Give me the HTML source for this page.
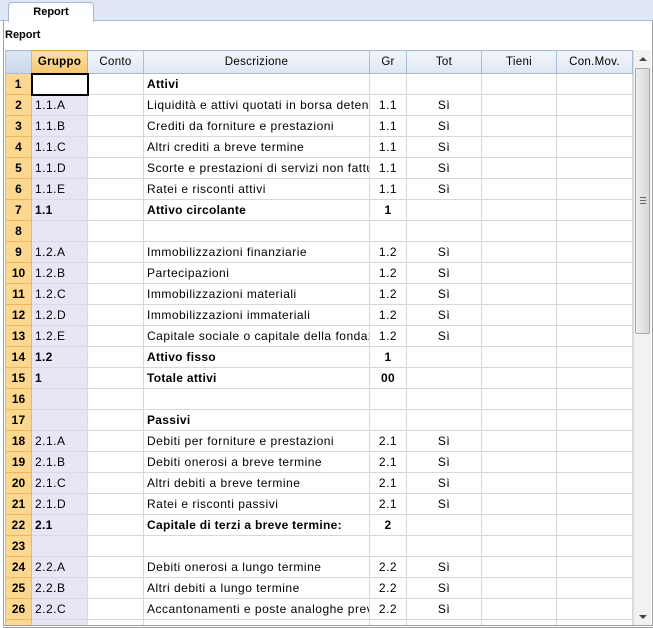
<!DOCTYPE html>
<html><head><meta charset="utf-8">
<style>
*{margin:0;padding:0;box-sizing:border-box}
body{width:653px;height:628px;overflow:hidden;background:#fff;font-family:"Liberation Sans",sans-serif;font-size:12px;color:#000;position:relative}
#strip{position:absolute;left:0;top:0;width:653px;height:21px;background:#dfe7f6;border-bottom:1px solid #a9b8cc}
#tab{position:absolute;left:8px;top:2px;width:86px;height:20px;background:linear-gradient(#fbfcfe,#fff);border:1px solid #a9b8cc;border-bottom:none;border-radius:4px 4px 0 0;font-weight:bold;text-align:center;line-height:18px;font-size:11px}
#panel{position:absolute;left:3px;top:21px;width:650px;height:607px;border-left:1px solid #a0a0a0;border-right:1px solid #a0a0a0}
#title{position:absolute;left:5px;top:29px;font-weight:bold;font-size:11px}
#wrap{position:absolute;left:5px;top:50px;width:628px;height:575px;overflow:hidden}
table{border-collapse:collapse;table-layout:fixed;width:627px}
td,th{height:21px;border:1px solid #d8d8d8;white-space:nowrap;overflow:hidden;padding:0 3px;font-weight:normal;letter-spacing:0.5px}
th{height:23px;background:linear-gradient(#f4f7fb,#dde6f2);border:1px solid #a9bdd4;font-size:11.5px;letter-spacing:0.3px}
th.g{background:linear-gradient(#fbe1a6,#f7c56e);font-weight:bold;border-color:#e8a940}
th.c0{background:linear-gradient(#dde6f2,#c9d7ea)}
td.n{background:#fcd78f;font-weight:bold;border-color:#f2b55e;text-align:center;padding:0;letter-spacing:0}
td.g{background:#e6e6f5;border-color:#d8d8e8}
td.c{text-align:center}
tr.b td{font-weight:bold;letter-spacing:0.3px}
td.sel{border:2px solid #000;background:#fff}
#bot{position:absolute;left:3px;top:625px;width:650px;height:3px;background:#fff;border-top:1px solid #a0a0a0;border-bottom:1px solid #a0a0a0}
#sb{position:absolute;left:633px;top:50px;width:18px;height:575px;background:#f2f2f2;border-left:1px solid #ddd}
#thumb{position:absolute;left:1px;top:18px;width:15px;height:266px;background:linear-gradient(90deg,#eee,#e2e2e2,#d8d8d8);border:1px solid #a8a8a8;border-radius:2px}
.up{position:absolute;left:5px;top:7px;width:0;height:0;border-left:4px solid transparent;border-right:4px solid transparent;border-bottom:4px solid #444}
.dn{position:absolute;left:5px;top:565px;width:0;height:0;border-left:4px solid transparent;border-right:4px solid transparent;border-top:4px solid #444}
.grip{position:absolute;left:4px;top:128px;width:6px;height:7px;border-top:1px solid #666;border-bottom:1px solid #666}
.grip:after{content:"";position:absolute;left:0;top:2px;width:6px;height:1px;background:#666}
</style></head><body>
<div id="strip"><div id="tab">Report</div></div>
<div id="panel"></div>
<div id="title">Report</div>
<div id="wrap">
<table>
<colgroup><col style="width:26px"><col style="width:56px"><col style="width:56px"><col style="width:226px"><col style="width:37px"><col style="width:75px"><col style="width:75px"><col style="width:76px"></colgroup>
<tr><th class="c0"></th><th class="g">Gruppo</th><th>Conto</th><th>Descrizione</th><th>Gr</th><th>Tot</th><th>Tieni</th><th>Con.Mov.</th></tr>
<tr class="b"><td class="n">1</td><td class="sel"></td><td></td><td>Attivi</td><td></td><td></td><td></td><td></td></tr>
<tr><td class="n">2</td><td class="g">1.1.A</td><td></td><td>Liquidità e attivi quotati in borsa detenuti</td><td class="c">1.1</td><td class="c">Sì</td><td></td><td></td></tr>
<tr><td class="n">3</td><td class="g">1.1.B</td><td></td><td>Crediti da forniture e prestazioni</td><td class="c">1.1</td><td class="c">Sì</td><td></td><td></td></tr>
<tr><td class="n">4</td><td class="g">1.1.C</td><td></td><td>Altri crediti a breve termine</td><td class="c">1.1</td><td class="c">Sì</td><td></td><td></td></tr>
<tr><td class="n">5</td><td class="g">1.1.D</td><td></td><td>Scorte e prestazioni di servizi non fatturate</td><td class="c">1.1</td><td class="c">Sì</td><td></td><td></td></tr>
<tr><td class="n">6</td><td class="g">1.1.E</td><td></td><td>Ratei e risconti attivi</td><td class="c">1.1</td><td class="c">Sì</td><td></td><td></td></tr>
<tr class="b"><td class="n">7</td><td class="g">1.1</td><td></td><td>Attivo circolante</td><td class="c">1</td><td></td><td></td><td></td></tr>
<tr><td class="n">8</td><td class="g"></td><td></td><td></td><td></td><td></td><td></td><td></td></tr>
<tr><td class="n">9</td><td class="g">1.2.A</td><td></td><td>Immobilizzazioni finanziarie</td><td class="c">1.2</td><td class="c">Sì</td><td></td><td></td></tr>
<tr><td class="n">10</td><td class="g">1.2.B</td><td></td><td>Partecipazioni</td><td class="c">1.2</td><td class="c">Sì</td><td></td><td></td></tr>
<tr><td class="n">11</td><td class="g">1.2.C</td><td></td><td>Immobilizzazioni materiali</td><td class="c">1.2</td><td class="c">Sì</td><td></td><td></td></tr>
<tr><td class="n">12</td><td class="g">1.2.D</td><td></td><td>Immobilizzazioni immateriali</td><td class="c">1.2</td><td class="c">Sì</td><td></td><td></td></tr>
<tr><td class="n">13</td><td class="g">1.2.E</td><td></td><td>Capitale sociale o capitale della fondazione</td><td class="c">1.2</td><td class="c">Sì</td><td></td><td></td></tr>
<tr class="b"><td class="n">14</td><td class="g">1.2</td><td></td><td>Attivo fisso</td><td class="c">1</td><td></td><td></td><td></td></tr>
<tr class="b"><td class="n">15</td><td class="g">1</td><td></td><td>Totale attivi</td><td class="c">00</td><td></td><td></td><td></td></tr>
<tr><td class="n">16</td><td class="g"></td><td></td><td></td><td></td><td></td><td></td><td></td></tr>
<tr class="b"><td class="n">17</td><td class="g"></td><td></td><td>Passivi</td><td></td><td></td><td></td><td></td></tr>
<tr><td class="n">18</td><td class="g">2.1.A</td><td></td><td>Debiti per forniture e prestazioni</td><td class="c">2.1</td><td class="c">Sì</td><td></td><td></td></tr>
<tr><td class="n">19</td><td class="g">2.1.B</td><td></td><td>Debiti onerosi a breve termine</td><td class="c">2.1</td><td class="c">Sì</td><td></td><td></td></tr>
<tr><td class="n">20</td><td class="g">2.1.C</td><td></td><td>Altri debiti a breve termine</td><td class="c">2.1</td><td class="c">Sì</td><td></td><td></td></tr>
<tr><td class="n">21</td><td class="g">2.1.D</td><td></td><td>Ratei e risconti passivi</td><td class="c">2.1</td><td class="c">Sì</td><td></td><td></td></tr>
<tr class="b"><td class="n">22</td><td class="g">2.1</td><td></td><td>Capitale di terzi a breve termine:</td><td class="c">2</td><td></td><td></td><td></td></tr>
<tr><td class="n">23</td><td class="g"></td><td></td><td></td><td></td><td></td><td></td><td></td></tr>
<tr><td class="n">24</td><td class="g">2.2.A</td><td></td><td>Debiti onerosi a lungo termine</td><td class="c">2.2</td><td class="c">Sì</td><td></td><td></td></tr>
<tr><td class="n">25</td><td class="g">2.2.B</td><td></td><td>Altri debiti a lungo termine</td><td class="c">2.2</td><td class="c">Sì</td><td></td><td></td></tr>
<tr><td class="n">26</td><td class="g">2.2.C</td><td></td><td>Accantonamenti e poste analoghe previste</td><td class="c">2.2</td><td class="c">Sì</td><td></td><td></td></tr>
<tr><td class="n"></td><td class="g"></td><td></td><td></td><td></td><td></td><td></td><td></td></tr>
</table>
</div>
<div id="bot"></div>
<div id="sb"><div class="up"></div><div id="thumb"><div class="grip"></div></div><div class="dn"></div></div>
</body></html>
